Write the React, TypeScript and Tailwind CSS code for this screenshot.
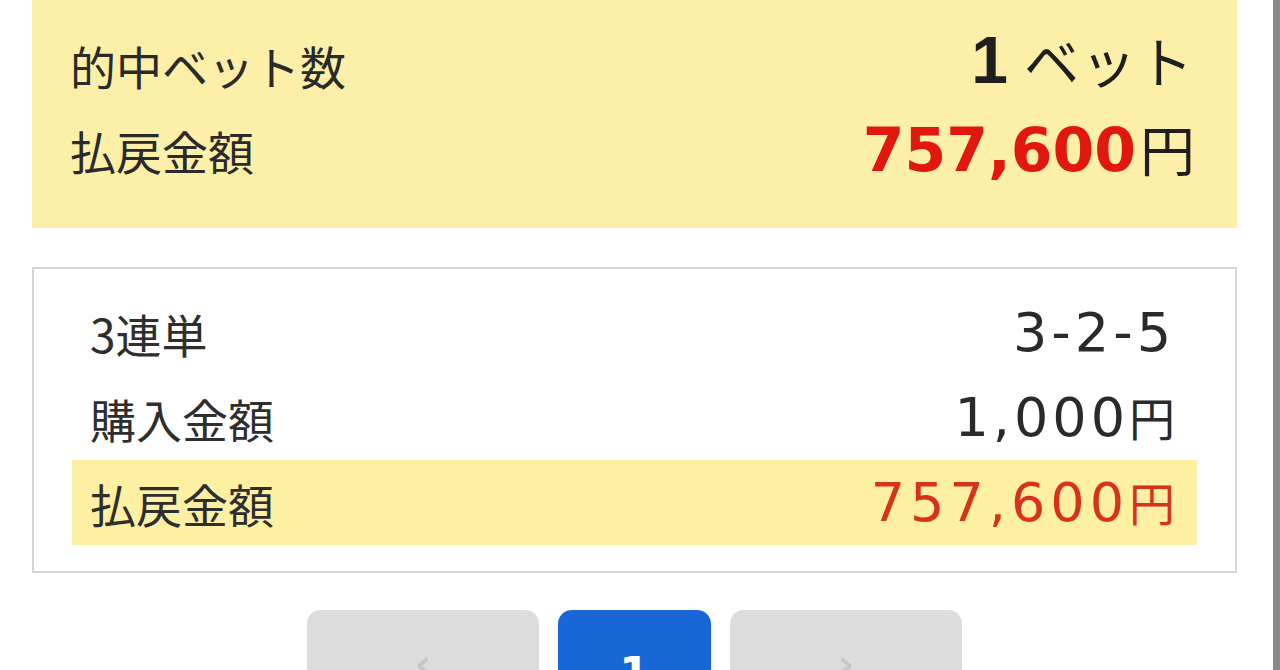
const jp = "font-['Noto_Sans_CJK_JP',sans-serif]"
const num = "font-['DejaVu_Sans','Noto_Sans_CJK_JP',sans-serif]"

function Row({ label, children, highlight }: { label: string; children: React.ReactNode; highlight?: boolean }) {
  return (
    <div
      className={`flex h-[85px] items-center justify-between pl-[18px] pr-[22px] ${
        highlight ? 'bg-[#fdf0a2]' : ''
      }`}
    >
      <span className={`${jp} text-[46px] leading-none text-[#2e2e2e]`}>{label}</span>
      <span className="leading-none">{children}</span>
    </div>
  )
}

export default function App() {
  return (
    <div className="flex h-[670px] w-[1280px] overflow-hidden bg-white">
      <div className="flex w-[1273px] flex-col">
        {/* Summary */}
        <div className="ml-[32px] h-[228px] w-[1205px] shrink-0 bg-[#fcefa8] pt-[22px] pl-[38px] pr-[42px]">
          <div className="flex h-[85px] items-center justify-between">
            <span className={`${jp} text-[46px] leading-none text-[#2a2a2a]`}>的中ベット数</span>
            <span className="mb-[10px] flex items-baseline leading-none text-[#1f1f1f]">
              <span className="mr-[16px] font-['Liberation_Sans',sans-serif] text-[66px] font-bold">1</span>
              <span className={`${jp} text-[55px] tracking-[2px]`}>ベット</span>
            </span>
          </div>
          <div className="flex h-[85px] items-center justify-between">
            <span className={`${jp} text-[46px] leading-none text-[#2a2a2a]`}>払戻金額</span>
            <span className="flex items-baseline leading-none">
              <span className={`${num} mr-[4px] text-[60px] font-bold text-[#e2170d]`}>757,600</span>
              <span className={`${jp} text-[55px] text-[#1f1f1f]`}>円</span>
            </span>
          </div>
        </div>

        {/* Bet detail */}
        <div className="ml-[32px] mt-[39px] h-[306px] w-[1205px] shrink-0 border-2 border-[#d4d4d4] px-[38px] pt-[21px]">
          <Row label="3連単">
            <span className={`${num} text-[54px] tracking-[4px] text-[#2a2a2a]`}>3-2-5</span>
          </Row>
          <Row label="購入金額">
            <span className="flex items-baseline text-[#2a2a2a]">
              <span className={`${num} text-[54px] tracking-[4px]`}>1,000</span>
              <span className={`${jp} text-[46px]`}>円</span>
            </span>
          </Row>
          <Row label="払戻金額" highlight>
            <span className="flex items-baseline text-[#d8321c]">
              <span className={`${num} text-[54px] tracking-[5px]`}>757,600</span>
              <span className={`${jp} text-[46px]`}>円</span>
            </span>
          </Row>
        </div>

        {/* Pager */}
        <div className="mt-[37px] ml-[32px] flex w-[1205px] shrink-0 justify-center gap-[19px]">
          <div className="flex h-[90px] w-[232px] items-start justify-center rounded-[14px] bg-[#dcdcdc] pt-[34px]">
            <span className={`${num} text-[40px] font-bold leading-none text-[#c6c6c6]`}>‹</span>
          </div>
          <div className="flex h-[90px] w-[153px] items-start justify-center rounded-[14px] bg-[#1966d6] pt-[42px]">
            <span className={`${num} text-[44px] font-bold leading-none text-white`}>1</span>
          </div>
          <div className="flex h-[90px] w-[232px] items-start justify-center rounded-[14px] bg-[#dcdcdc] pt-[34px]">
            <span className={`${num} text-[40px] font-bold leading-none text-[#c6c6c6]`}>›</span>
          </div>
        </div>
      </div>
      <div className="w-[7px] shrink-0 bg-[#8a8a8a]" />
    </div>
  )
}
